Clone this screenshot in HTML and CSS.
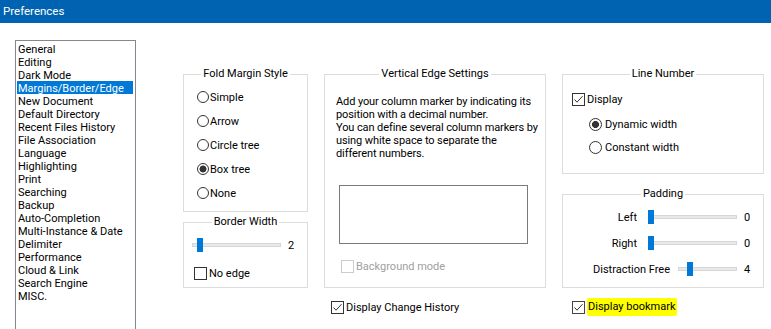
FILE: index.html
```html
<!DOCTYPE html>
<html lang="en">
<head>
    <meta charset="UTF-8">
    <title>Preferences</title>
    <link rel="stylesheet" href="styles.css">
</head>
<body>
    <div class="titlebar">Preferences</div>

    <div class="main">
        <ul class="category-list">
            <li>General</li>
            <li>Editing</li>
            <li>Dark Mode</li>
            <li class="selected">Margins/Border/Edge</li>
            <li>New Document</li>
            <li>Default Directory</li>
            <li>Recent Files History</li>
            <li>File Association</li>
            <li>Language</li>
            <li>Highlighting</li>
            <li>Print</li>
            <li>Searching</li>
            <li>Backup</li>
            <li>Auto-Completion</li>
            <li>Multi-Instance &amp; Date</li>
            <li>Delimiter</li>
            <li>Performance</li>
            <li>Cloud &amp; Link</li>
            <li>Search Engine</li>
            <li>MISC.</li>
        </ul>

        <!-- fold margin + border width -->
        <div class="column col-fold">
            <div class="group fold-group">
                <div class="group-title">Fold Margin Style</div>
                <div class="fold-options">
                    <label class="option"><span class="radio"></span>Simple</label>
                    <label class="option"><span class="radio"></span>Arrow</label>
                    <label class="option"><span class="radio"></span>Circle tree</label>
                    <label class="option"><span class="radio on"></span>Box tree</label>
                    <label class="option"><span class="radio"></span>None</label>
                </div>
            </div>

            <div class="group border-group">
                <div class="group-title">Border Width</div>
                <div class="slider-row border-slider">
                    <div class="slider" style="width: 89px;">
                        <div class="track"></div>
                        <div class="thumb" style="left: 5px;"></div>
                    </div>
                    <span class="value">2</span>
                </div>
                <label class="check-row no-edge">
                    <svg class="checkbox" width="13" height="13" viewBox="0 0 13 13"><rect x="0.5" y="0.5" width="12" height="12" fill="#fff" stroke="#333"/></svg>
                    No edge
                </label>
            </div>
        </div>

        <!-- vertical edge -->
        <div class="column col-edge">
            <div class="group edge-group">
                <div class="group-title">Vertical Edge Settings</div>
                <p class="edge-help">
                    Add your column marker by indicating its<br>
                    position with a decimal number.<br>
                    You can define several column markers by<br>
                    using white space to separate the<br>
                    different numbers.
                </p>
                <div class="edge-input"></div>
                <label class="check-row disabled bg-mode">
                    <svg class="checkbox" width="13" height="13" viewBox="0 0 13 13"><rect x="0.5" y="0.5" width="12" height="12" fill="#fff" stroke="#cccccc"/></svg>
                    Background mode
                </label>
            </div>
            <label class="check-row change-history">
                <svg class="checkbox" width="13" height="13" viewBox="0 0 13 13"><rect x="0.5" y="0.5" width="12" height="12" fill="#fff" stroke="#333"/><path d="M2.5 6.5 L5 9.2 L10.5 3.2" fill="none" stroke="#333"/></svg>
                Display Change History
            </label>
        </div>

        <!-- line number + padding -->
        <div class="column col-line">
            <div class="group line-group">
                <div class="group-title">Line Number</div>
                <label class="check-row line-display">
                    <svg class="checkbox" width="13" height="13" viewBox="0 0 13 13"><rect x="0.5" y="0.5" width="12" height="12" fill="#fff" stroke="#333"/><path d="M2.5 6.5 L5 9.2 L10.5 3.2" fill="none" stroke="#333"/></svg>
                    Display
                </label>
                <div class="width-options">
                    <label class="option wide"><span class="radio big on"></span>Dynamic width</label>
                    <label class="option wide"><span class="radio big"></span>Constant width</label>
                </div>
            </div>

            <div class="group padding-group">
                <div class="group-title">Padding</div>
                <div class="slider-row pad-row pad-first">
                    <span class="pad-label">Left</span>
                    <div class="slider" style="width: 89px;">
                        <div class="track"></div>
                        <div class="thumb" style="left: 0px;"></div>
                    </div>
                    <span class="value">0</span>
                </div>
                <div class="slider-row pad-row">
                    <span class="pad-label">Right</span>
                    <div class="slider" style="width: 89px;">
                        <div class="track"></div>
                        <div class="thumb" style="left: 0px;"></div>
                    </div>
                    <span class="value">0</span>
                </div>
                <div class="slider-row pad-row">
                    <span class="pad-label short-gap">Distraction Free</span>
                    <div class="slider" style="width: 59px;">
                        <div class="track"></div>
                        <div class="thumb" style="left: 9px;"></div>
                    </div>
                    <span class="value">4</span>
                </div>
            </div>
            <label class="check-row bookmark">
                <svg class="checkbox" width="13" height="13" viewBox="0 0 13 13"><rect x="0.5" y="0.5" width="12" height="12" fill="#fff" stroke="#444"/><path d="M2.5 6.5 L5 9.2 L10.5 3.2" fill="none" stroke="#333"/></svg>
                <span class="marker">Display bookmark</span>
            </label>
        </div>
    </div>
</body>
</html>
```

FILE: styles.css
```css
* {
    margin: 0;
    padding: 0;
    box-sizing: border-box;
}

body {
    font-family: Roboto, "Liberation Sans", sans-serif;
    font-size: 11px;
    color: #000;
    background: #fff;
    width: 771px;
    height: 329px;
    overflow: hidden;
}

.titlebar {
    height: 23px;
    line-height: 22px;
    padding-left: 3px;
    background: #0063b1;
    color: #fff;
    font-size: 11.5px;
}

.main {
    display: flex;
    align-items: flex-start;
    padding: 17px 0 0 15px;
}

/* left category list */
.category-list {
    list-style: none;
    flex-shrink: 0;
    width: 121px;
    height: 300px;
    padding-top: 1px;
    border: 1px solid #828790;
}

.category-list li {
    height: 13px;
    line-height: 15px;
    margin: 0 2px 0 1px;
    padding-left: 1px;
    white-space: nowrap;
}

.category-list li.selected {
    background: #0078d7;
    color: #fff;
}

.column {
    flex-shrink: 0;
    margin-top: 34px;
}

.col-fold {
    width: 125px;
    margin-left: 47px;
}

.col-edge {
    width: 222px;
    margin-left: 16px;
}

.col-line {
    width: 202px;
    margin-left: 16px;
}

/* group boxes */
.group {
    border: 1px solid #dcdcdc;
}

.group-title {
    width: fit-content;
    height: 14px;
    line-height: 14px;
    margin: -8px auto 0;
    padding: 0 2px;
    background: #fff;
    white-space: nowrap;
}

.fold-group {
    height: 138px;
}

.border-group {
    height: 66px;
    margin-top: 10px;
}

.edge-group {
    height: 214px;
}

.line-group {
    height: 100px;
}

.padding-group {
    height: 94px;
    margin-top: 20px;
}

/* radio buttons */
.fold-options {
    margin-top: 4px;
    padding-left: 13px;
}

.option {
    display: flex;
    align-items: center;
    height: 24px;
    white-space: nowrap;
}

.radio {
    flex-shrink: 0;
    width: 12px;
    height: 12px;
    margin-right: 1px;
    border: 1px solid #333;
    border-radius: 50%;
    background: #fff;
}

.radio.big {
    width: 13px;
    height: 13px;
    margin-right: 3px;
}

.radio.on {
    background: radial-gradient(circle, #333 0, #333 3.2px, #fff 3.8px);
}

.width-options {
    margin-top: 5px;
    padding-left: 26px;
}

.option.wide {
    height: 23px;
}

/* checkboxes */
.check-row {
    display: flex;
    align-items: center;
    height: 18px;
    white-space: nowrap;
}

.checkbox {
    flex-shrink: 0;
    margin-right: 2px;
}

.check-row.disabled {
    color: #a0a0a0;
}

.no-edge {
    margin-top: 10px;
    padding-left: 10px;
}

.bg-mode {
    margin-top: 13px;
    padding-left: 16px;
}

.change-history {
    margin-top: 10px;
    padding-left: 7px;
}

.line-display {
    margin-top: 9px;
    padding-left: 9px;
}

.bookmark {
    margin-top: 10px;
    padding-left: 10px;
}

.marker {
    line-height: 18px;
    padding: 0 1px;
    background: #ffff00;
    border-radius: 2px;
}

/* sliders */
.slider-row {
    display: flex;
    align-items: center;
    height: 18px;
}

.border-slider {
    margin-top: 7px;
    padding-left: 8px;
}

.slider {
    position: relative;
    flex-shrink: 0;
    height: 16px;
    display: flex;
    align-items: center;
}

.track {
    width: 100%;
    height: 4px;
    background: #e7eaea;
    border: 1px solid #d6d6d6;
}

.thumb {
    position: absolute;
    top: 1px;
    width: 6px;
    height: 14px;
    background: #0078d7;
}

.value {
    width: 10px;
    margin-left: 7px;
}

.pad-row {
    justify-content: flex-end;
    height: 26px;
    padding-right: 9px;
}

.pad-first {
    margin-top: 3px;
}

.pad-label {
    margin-right: 11px;
    white-space: nowrap;
}

.pad-label.short-gap {
    margin-right: 8px;
}

/* vertical edge text + input */
.edge-help {
    margin-top: 14px;
    padding: 0 11px;
    line-height: 13px;
    white-space: nowrap;
    letter-spacing: -0.1px;
}

.edge-input {
    width: 189px;
    height: 59px;
    margin: 25px 0 0 14px;
    border: 1px solid #7a7a7a;
}
```
